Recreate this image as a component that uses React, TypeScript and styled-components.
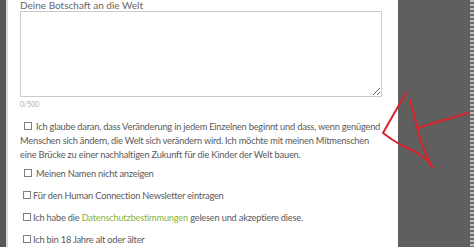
import React from 'react';
import styled, { createGlobalStyle } from 'styled-components';

const GlobalStyle = createGlobalStyle`
  html, body {
    margin: 0;
    padding: 0;
    width: 474px;
    height: 247px;
    overflow: hidden;
    background: #5e5e5e;
  }
  * {
    box-sizing: border-box;
  }
`;

const Page = styled.div`
  position: relative;
  display: flex;
  width: 474px;
  height: 247px;
  font-family: Lato, 'Open Sans', sans-serif;
  color: #666;
`;

const LeftEdge = styled.div`
  width: 8px;
  background: #575757;
  border-right: 2px solid #d8d8d8;
`;

const Panel = styled.div`
  width: 390px;
  background: #fff;
  padding: 0 14px 0 12px;
`;

const Backdrop = styled.div`
  flex: 1;
  display: flex;
  justify-content: flex-end;
  background: #5f5f5f;
`;

const ScrollStripe = styled.div`
  width: 4px;
  background: repeating-linear-gradient(
    to bottom,
    #bdbdbd 0px,
    #bdbdbd 2px,
    #6a6a6a 2px,
    #6a6a6a 4px
  );
`;

const Label = styled.div`
  font-size: 10px;
  line-height: 12px;
  color: #666;
  margin-top: -1px;
`;

const MessageBox = styled.textarea`
  display: block;
  width: 362px;
  height: 86px;
  border: 1px solid #cbcbcb;
  border-radius: 0;
  resize: vertical;
  font-family: inherit;
`;

const Counter = styled.div`
  font-size: 7px;
  color: #aaa;
  margin-top: 2px;
  line-height: 10px;
`;

const Option = styled.label<{ $mt: number; $indent?: number }>`
  display: block;
  font-size: 9.25px;
  letter-spacing: -0.2px;
  line-height: 14px;
  white-space: nowrap;
  color: #5a5a5a;
  margin-top: ${p => p.$mt}px;
  padding-left: ${p => p.$indent ?? 0}px;
`;

const Box = styled.span<{ $gap: number; $lead?: number }>`
  display: inline-block;
  width: 8px;
  height: 8px;
  border: 1px solid #808080;
  margin-left: ${p => p.$lead ?? 0}px;
  margin-right: ${p => p.$gap}px;
`;

const Link = styled.a`
  color: #8ab33a;
  text-decoration: none;
`;

const Arrow = styled.svg`
  position: absolute;
  left: 0;
  top: 0;
  pointer-events: none;
`;

export default function App() {
  return (
    <>
      <GlobalStyle />
      <Page>
        <LeftEdge />
        <Panel>
          <Label>Deine Botschaft an die Welt</Label>
          <MessageBox />
          <Counter>0/500</Counter>
          <Option $mt={11}>
            <Box $gap={4} $lead={4} />
            Ich glaube daran, dass Veränderung in jedem Einzelnen beginnt und dass, wenn genügend
            <br />
            Menschen sich ändern, die Welt sich verändern wird. Ich möchte mit meinen Mitmenschen
            <br />
            eine Brücke zu einer nachhaltigen Zukunft für die Kinder der Welt bauen.
          </Option>
          <Option $mt={5} $indent={4}>
            <Box $gap={4} />
            Meinen Namen nicht anzeigen
          </Option>
          <Option $mt={8} $indent={3}>
            <Box $gap={2} />
            Für den Human Connection Newsletter eintragen
          </Option>
          <Option $mt={8} $indent={3}>
            <Box $gap={2} />
            Ich habe die <Link>Datenschutzbestimmungen</Link> gelesen und akzeptiere diese.
          </Option>
          <Option $mt={8} $indent={3}>
            <Box $gap={2} />
            Ich bin 18 Jahre alt oder älter
          </Option>
        </Panel>
        <Backdrop>
          <ScrollStripe />
        </Backdrop>
        <Arrow width="474" height="247" viewBox="0 0 474 247">
          <g fill="none" stroke="#d8232a" strokeWidth="2" strokeLinecap="round" strokeLinejoin="round">
            <path d="M406 93 Q396 110 383 133 Q392 140 401 145 Q418 152 427 160 L432 167" />
            <path d="M410 100 Q414 114 417 127 Q421 145 432 167" />
            <path d="M417 128 Q444 120 468 113" />
          </g>
        </Arrow>
      </Page>
    </>
  );
}
